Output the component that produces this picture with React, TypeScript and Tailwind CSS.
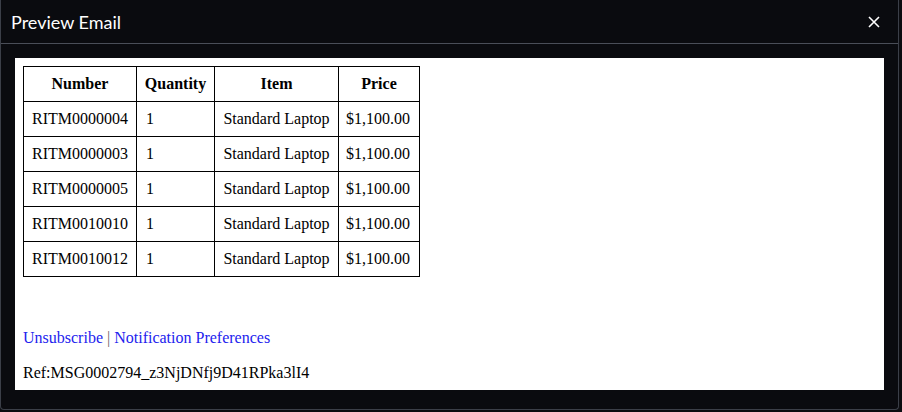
import React from "react";

const rows = [
  "RITM0000004",
  "RITM0000003",
  "RITM0000005",
  "RITM0010010",
  "RITM0010012",
];

export default function App() {
  return (
    <div className="h-[412px] w-[902px] overflow-hidden bg-[#0c0d11]">
      {/* Modal */}
      <div className="flex h-[410px] w-[899px] flex-col rounded-b-[4px] border-x border-b border-[#3b3f48] bg-[#0a0b0f]">
        {/* Header */}
        <div className="flex h-[44px] shrink-0 items-center justify-between border-b border-[#4a4e58] pl-[10px] pr-[18px]">
          <h1 className="text-[18px] leading-none text-white [font-family:Lato,sans-serif]">
            Preview Email
          </h1>
          <svg width="12" height="12" viewBox="0 0 12 12" className="mt-[1px]">
            <path d="M1 1 L11 11 M11 1 L1 11" stroke="#ffffff" strokeWidth="1.6" />
          </svg>
        </div>

        {/* Body */}
        <div className="px-[14px] pt-[14px]">
          <div className="h-[332px] bg-white p-[8px] text-[16px] text-black [font-family:'Liberation_Serif',serif]">
            <table className="border-collapse">
              <thead>
                <tr className="h-[35px]">
                  <th className="w-[113px] border border-black text-center font-bold">Number</th>
                  <th className="w-[78px] border border-black text-center font-bold">Quantity</th>
                  <th className="w-[124px] border border-black text-center font-bold">Item</th>
                  <th className="w-[81px] border border-black text-center font-bold">Price</th>
                </tr>
              </thead>
              <tbody>
                {rows.map((r) => (
                  <tr key={r} className="h-[35px]">
                    <td className="border border-black px-[8px]">{r}</td>
                    <td className="border border-black px-[9px]">1</td>
                    <td className="border border-black text-center">Standard Laptop</td>
                    <td className="border border-black px-[7px]">$1,100.00</td>
                  </tr>
                ))}
              </tbody>
            </table>

            <p className="mt-[52px] leading-[18px]">
              <span className="text-[#2222ee]">Unsubscribe</span>
              <span className="text-[#666666]"> | </span>
              <span className="text-[#2222ee]">Notification Preferences</span>
            </p>
            <p className="mt-[17px] leading-[18px]">Ref:MSG0002794_z3NjDNfj9D41RPka3lI4</p>
          </div>
        </div>
      </div>
    </div>
  );
}
